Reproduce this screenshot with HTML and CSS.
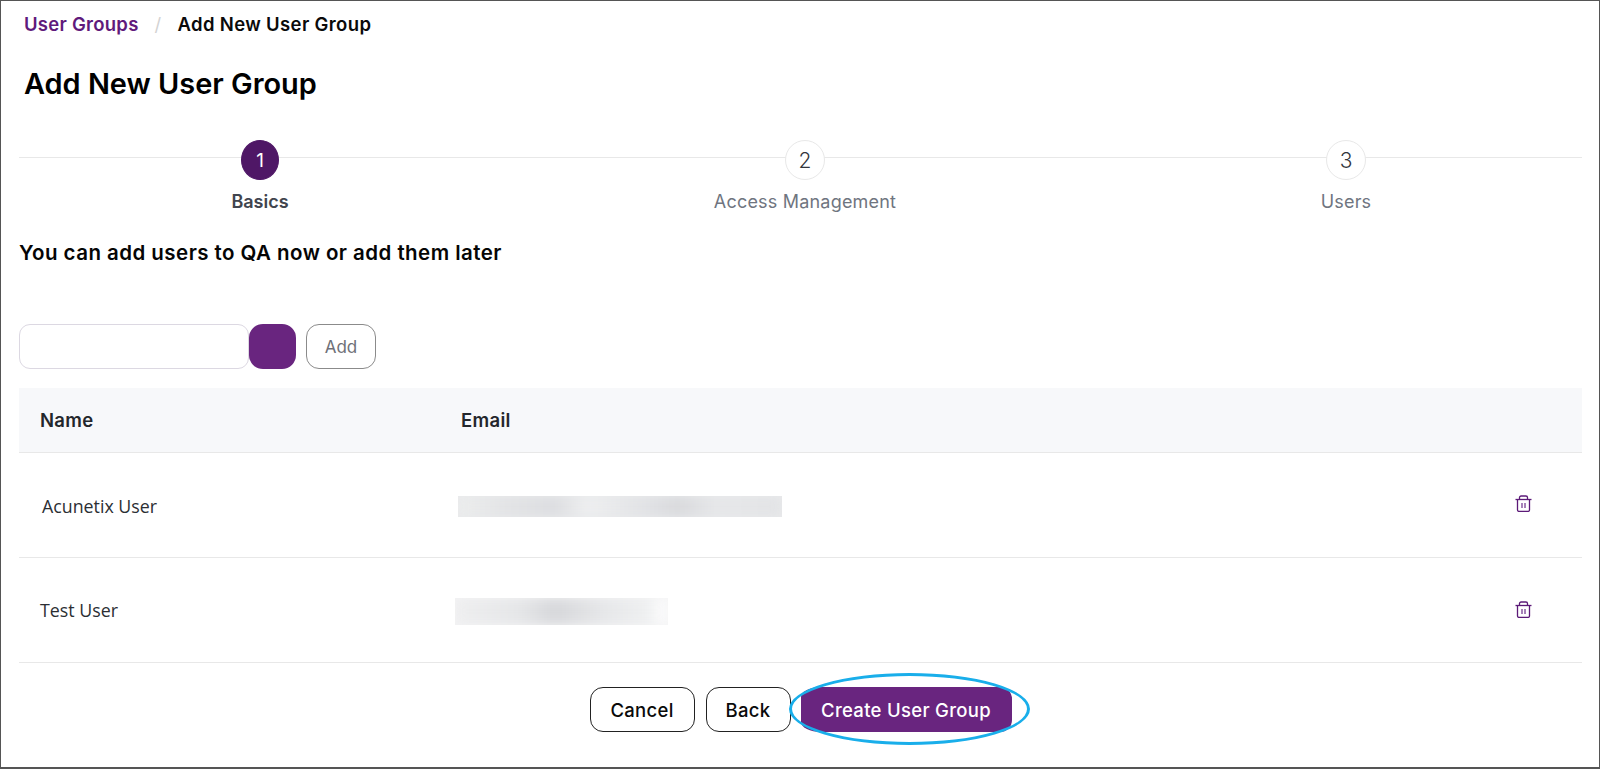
FILE: index.html
```html
<!DOCTYPE html>
<html lang="en">
<head>
<meta charset="utf-8">
<title>Add New User Group</title>
<link rel="stylesheet" href="styles.css">
</head>
<body>
<div class="frame">
  <nav class="crumbs">
    <a class="crumb-link">User Groups</a>
    <span class="crumb-sep">/</span>
    <span class="crumb-current">Add New User Group</span>
  </nav>
  <h1 class="title">Add New User Group</h1>
  <div class="stepper">
    <div class="step step-active"><div class="step-dot">1</div><div class="step-label">Basics</div></div>
    <div class="step"><div class="step-dot">2</div><div class="step-label">Access Management</div></div>
    <div class="step"><div class="step-dot">3</div><div class="step-label">Users</div></div>
  </div>
  <h2 class="subtitle">You can add users to QA now or add them later</h2>
  <div class="add-row">
    <input class="add-input" type="text" aria-label="User">
    <button class="add-swatch" type="button" aria-label="Search"></button>
    <button class="add-btn" type="button">Add</button>
  </div>
  <div class="table">
    <div class="tr th"><div class="c-name">Name</div><div class="c-email">Email</div></div>
    <div class="tr td">
      <div class="c-name">Acunetix User</div>
      <div class="c-email"><div class="blur blur-a"><div class="blur-ink"></div></div></div>
      <svg class="trash" viewBox="0 0 17 17" fill="none" stroke="#5c1a78" stroke-width="1.3"><path d="M0.5 4.5H16.5"/><path d="M2.5 4.5V15a1.4 1.4 0 0 0 1.4 1.4h9.2a1.4 1.4 0 0 0 1.4-1.4V4.5"/><path d="M4.5 4.5V2.6A1.6 1.6 0 0 1 6.1 1h4.8a1.6 1.6 0 0 1 1.6 1.6v1.9"/><path d="M7 8v5M10 8v5" stroke="#8a5aa3" stroke-width="1.5"/></svg>
    </div>
    <div class="tr td">
      <div class="c-name c-name-2">Test User</div>
      <div class="c-email"><div class="blur blur-b"><div class="blur-ink"></div></div></div>
      <svg class="trash trash-2" viewBox="0 0 17 17" fill="none" stroke="#5c1a78" stroke-width="1.3"><path d="M0.5 4.5H16.5"/><path d="M2.5 4.5V15a1.4 1.4 0 0 0 1.4 1.4h9.2a1.4 1.4 0 0 0 1.4-1.4V4.5"/><path d="M4.5 4.5V2.6A1.6 1.6 0 0 1 6.1 1h4.8a1.6 1.6 0 0 1 1.6 1.6v1.9"/><path d="M7 8v5M10 8v5" stroke="#8a5aa3" stroke-width="1.5"/></svg>
    </div>
  </div>
  <div class="actions">
    <button class="btn" type="button">Cancel</button>
    <button class="btn btn-back" type="button">Back</button>
    <div class="primary-wrap">
      <button class="btn-primary" type="button">Create User Group</button>
      <div class="highlight"></div>
    </div>
  </div>
</div>
</body>
</html>
```
FILE: styles.css
```css
* { box-sizing: border-box; }
html, body { margin: 0; padding: 0; background: #fff; }
body { font-family: "Inter", "Liberation Sans", sans-serif; color: #000; }
.frame {
  width: 1600px;
  height: 769px;
  border: 1px solid #555;
  border-left-width: 1.5px;
  border-bottom-width: 2px;
  padding: 0 17px 0 18px;
  overflow: hidden;
}
.crumbs { display: flex; align-items: center; height: 46px; padding: 0 0 0 5px; font-size: 18.5px; font-weight: 600; letter-spacing: 0.25px; }
.crumb-link { color: #5f1a7c; }
.crumb-sep { color: #d3d3d3; margin: 0 16px; font-weight: 400; }
.crumb-current { color: #0a0a0a; letter-spacing: 0.35px; }
.title { margin: 0; height: 64px; padding-left: 5px; font-size: 28.9px; line-height: 74px; font-weight: 600; color: #000; }
.stepper {
  display: grid;
  grid-template-columns: 545px 541px 200px;
  height: 119px;
  padding: 29px 0 0 141px;
  background: linear-gradient(#e8e8e8, #e8e8e8) 0 46px / 100% 1px no-repeat;
}
.step { width: 200px; display: flex; flex-direction: column; align-items: center; }
.step-dot {
  width: 40px; height: 40px; border-radius: 50%;
  border: 1px solid #e8e8e8; background: #fff;
  display: flex; align-items: center; justify-content: center;
  font-size: 21px; font-weight: 300; color: #33363d;
}
.step-label { margin-top: 9px; font-size: 18px; letter-spacing: 0.2px; line-height: 26px; color: #6f7580; }
.step-active .step-dot { background: #4f1766; border-color: #4f1766; color: #fff; width: 38px; height: 40px; font-size: 19px; font-weight: 400; }
.step-active .step-label { color: #41454e; font-weight: 600; letter-spacing: 0; }
.subtitle { margin: 0; height: 94px; padding-top: 9px; font-size: 20.5px; letter-spacing: 0.45px; line-height: 28px; font-weight: 600; color: #050505; }
.add-row { display: flex; align-items: stretch; height: 45px; }
.add-input { width: 230px; height: 45px; border: 1px solid #dcd8e2; border-radius: 11px; background: #fff; outline: none; }
.add-swatch { width: 47px; height: 45px; border: 0; border-radius: 14px; background: #69257f; padding: 0; }
.add-btn { width: 70px; height: 45px; margin-left: 10px; padding: 0; border: 1px solid #8b8b8b; border-radius: 13px; background: #fff; font: 400 17px "Inter", sans-serif; color: #6e7078; }
.table { margin-top: 19px; }
.tr { display: flex; align-items: center; position: relative; border-bottom: 1px solid #e8e8e8; }
.th { height: 65px; background: #f7f8fa; font-weight: 600; font-size: 18.5px; letter-spacing: 0.3px; color: #23262b; }
.td { height: 105px; font-family: "Open Sans", sans-serif; font-size: 17.8px; color: #2b2e33; }
.th .c-name { width: 442px; padding-left: 21px; }
.td .c-name { width: 441px; padding: 2px 0 0 23px; }
.td .c-name-2 { padding: 0 0 0 21px; }
.c-email { flex: 1; }
.blur { overflow: hidden; background: #e9eaec; }
.blur-ink { width: 100%; height: 100%; filter: blur(6px); }
.blur-a { width: 324px; height: 21px; margin: 2px 0 0 -2px; }
.blur-a .blur-ink { background: linear-gradient(90deg, #eceded 0, #e2e3e5 15%, #dcdde0 30%, #eeeff0 40%, #dfe0e3 60%, #d8d9dc 68%, #e6e7e9 80%, #e2e3e5 100%); }
.blur-b { width: 213px; height: 27px; margin: 2px 0 0 -5px; background: #f4f4f5; }
.blur-b .blur-ink { background: linear-gradient(90deg, #eeeeef 0, #e5e6e8 30%, #d6d7da 47%, #e6e7e9 70%, #eeeff0 90%, #fff 100%); }
.trash { width: 17px; height: 17px; margin: -3px 50px 0 0; flex: none; }
.trash-2 { margin-top: -1px; }
.actions { display: flex; justify-content: center; align-items: flex-start; gap: 11px; padding: 24px 0 0 0; }
.btn { height: 45px; padding: 0; border: 1px solid #222; border-radius: 13px; background: #fff; font: 500 18.5px "Inter", sans-serif; letter-spacing: 0.3px; color: #0a0a0a; width: 105px; }
.btn-back { width: 85px; }
.primary-wrap { position: relative; }
.btn-primary { display: block; width: 211px; height: 45px; padding: 0; border: 0; border-radius: 20px 12px 12px 20px / 10px 12px 12px 10px; background: #69257f; color: #fff; font: 500 18.5px "Inter", sans-serif; letter-spacing: 0.3px; margin-left: -1px; }
.highlight { position: absolute; left: -13px; top: -14px; width: 241px; height: 72px; border: 3px solid #19aeea; border-radius: 50%; pointer-events: none; }
```
